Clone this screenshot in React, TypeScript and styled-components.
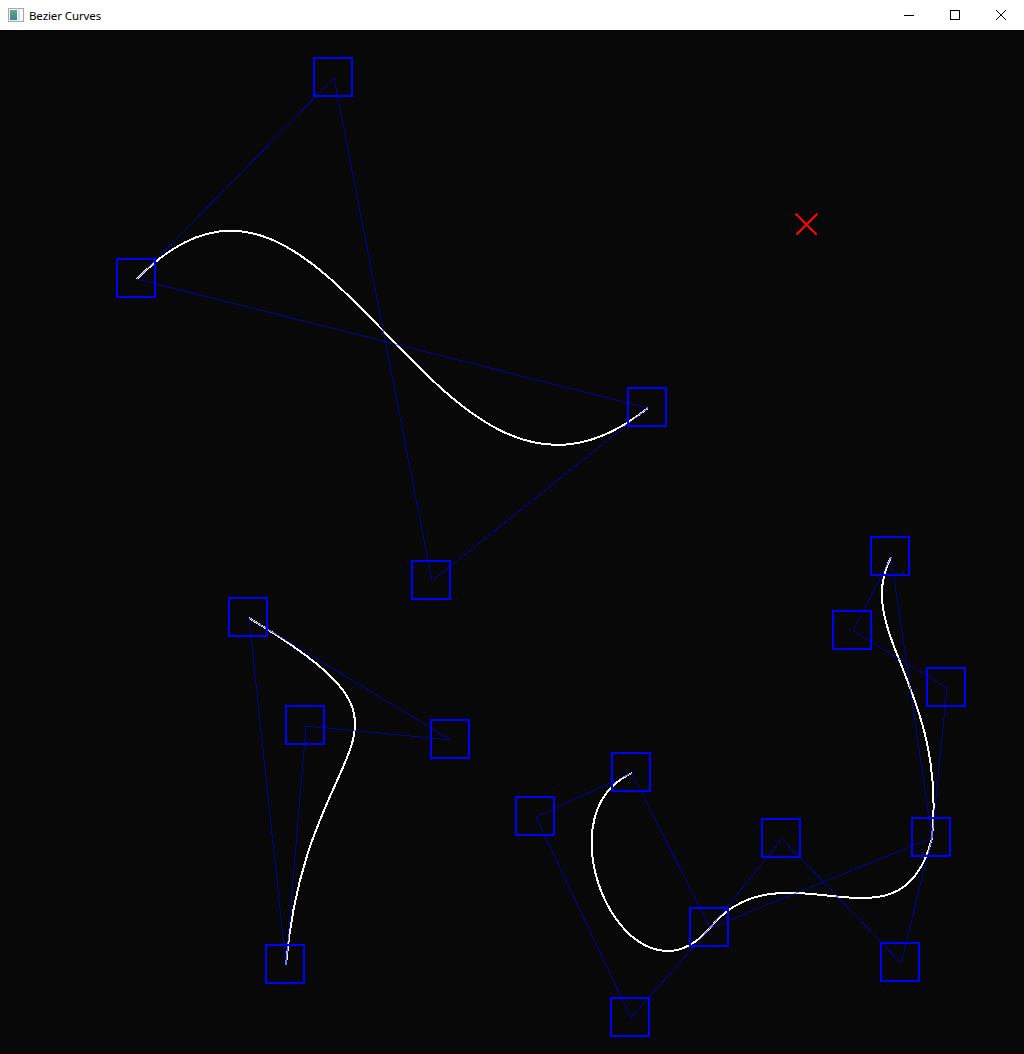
import React from "react";
import styled, { createGlobalStyle } from "styled-components";

const Global = createGlobalStyle`
  html, body { margin: 0; padding: 0; background: #080808; overflow: hidden; }
  #root { width: 1024px; height: 1054px; }
`;

const Window = styled.div`
  width: 1024px;
  height: 1054px;
  display: flex;
  flex-direction: column;
  background: #080808;
`;

const TitleBar = styled.div`
  height: 30px;
  flex: 0 0 30px;
  background: #ffffff;
  display: flex;
  align-items: center;
`;

const TitleIcon = styled.svg`
  width: 16px;
  height: 16px;
  margin-left: 8px;
  flex: 0 0 16px;
`;

const Title = styled.span`
  margin-left: 5px;
  font-family: "Noto Sans", "Open Sans", sans-serif;
  font-size: 11.5px;
  color: #000000;
  flex: 1;
  letter-spacing: -0.1px;
`;

const Controls = styled.div`
  display: flex;
  height: 30px;
`;

const ControlButton = styled.div`
  width: 46px;
  height: 30px;
  display: flex;
  align-items: center;
  justify-content: center;
`;

const ControlGlyph = styled.svg`
  width: 10px;
  height: 10px;
  overflow: visible;
`;

const Canvas = styled.svg`
  display: block;
  width: 1024px;
  height: 1024px;
  flex: 0 0 1024px;
  background: #080808;
`;

type Pt = [number, number];

const curves: { segs: [Pt, Pt, Pt, Pt][] }[] = [
  { segs: [[[137, 279], [334, 78], [432, 581], [648, 408]]] },
  { segs: [[[249, 618], [451, 740], [306, 726], [286, 965]]] },
  {
    segs: [
      [[632, 773], [536, 817], [631, 1018], [710, 928]],
      [[710, 928], [782, 839], [901, 963], [932, 838]],
      [[932, 838], [947, 688], [853, 631], [891, 557]],
    ],
  },
];

const segPath = (s: [Pt, Pt, Pt, Pt]) =>
  `M${s[0][0]} ${s[0][1]} C${s[1][0]} ${s[1][1]} ${s[2][0]} ${s[2][1]} ${s[3][0]} ${s[3][1]}`;

const polyPath = (s: [Pt, Pt, Pt, Pt]) =>
  `M${s[0][0]} ${s[0][1]} L${s[1][0]} ${s[1][1]} L${s[2][0]} ${s[2][1]} L${s[3][0]} ${s[3][1]} Z`;

export default function App() {
  const allSegs = curves.flatMap((c) => c.segs);
  const pts: Pt[] = [];
  allSegs.forEach((s) =>
    s.forEach((p) => {
      if (!pts.some((q) => q[0] === p[0] && q[1] === p[1])) pts.push(p);
    })
  );
  return (
    <>
      <Global />
      <Window>
        <TitleBar>
          <TitleIcon viewBox="0 0 16 16">
            <defs>
              <linearGradient id="ig" x1="0" y1="0" x2="0" y2="1">
                <stop offset="0" stopColor="#5fa3b8" />
                <stop offset="0.5" stopColor="#4e9a6e" />
                <stop offset="1" stopColor="#3f7fae" />
              </linearGradient>
            </defs>
            <rect x="0.5" y="1.5" width="15" height="13" fill="#f4f4f4" stroke="#a8a8a8" />
            <rect x="2" y="3" width="7" height="10" fill="url(#ig)" />
            <rect x="10" y="3" width="2" height="10" fill="#cfe3ea" />
            <rect x="12" y="3" width="2" height="10" fill="#ffffff" />
          </TitleIcon>
          <Title>Bezier Curves</Title>
          <Controls>
            <ControlButton>
              <ControlGlyph viewBox="0 0 10 10">
                <line x1="0" y1="5.5" x2="10" y2="5.5" stroke="#000" strokeWidth="1" shapeRendering="crispEdges" />
              </ControlGlyph>
            </ControlButton>
            <ControlButton>
              <ControlGlyph viewBox="0 0 10 10">
                <rect x="0.5" y="0.5" width="9" height="9" fill="none" stroke="#000" strokeWidth="1" shapeRendering="crispEdges" />
              </ControlGlyph>
            </ControlButton>
            <ControlButton>
              <ControlGlyph viewBox="0 0 10 10">
                <path d="M0 0 L10 10 M10 0 L0 10" stroke="#000" strokeWidth="1" fill="none" />
              </ControlGlyph>
            </ControlButton>
          </Controls>
        </TitleBar>
        <Canvas viewBox="0 30 1024 1024">
          {allSegs.map((s, i) => (
            <path key={"c" + i} d={segPath(s)} fill="none" stroke="#ffffff" strokeWidth="2" shapeRendering="crispEdges" />
          ))}
          {allSegs.map((s, i) => (
            <path
              key={"p" + i}
              d={polyPath(s)}
              fill="none"
              stroke="#0000ff"
              strokeOpacity="0.55"
              strokeWidth="1"
              shapeRendering="crispEdges"
            />
          ))}
          {pts.map((p, i) => (
            <rect
              key={"r" + i}
              x={p[0] - 20}
              y={p[1] - 20}
              width="38"
              height="38"
              fill="none"
              stroke="#0000ff"
              strokeWidth="2"
              shapeRendering="crispEdges"
            />
          ))}
          <path d="M796 214 L817 235 M817 214 L796 235" stroke="#ff0000" strokeWidth="1.5" fill="none" shapeRendering="crispEdges" />
        </Canvas>
      </Window>
    </>
  );
}
